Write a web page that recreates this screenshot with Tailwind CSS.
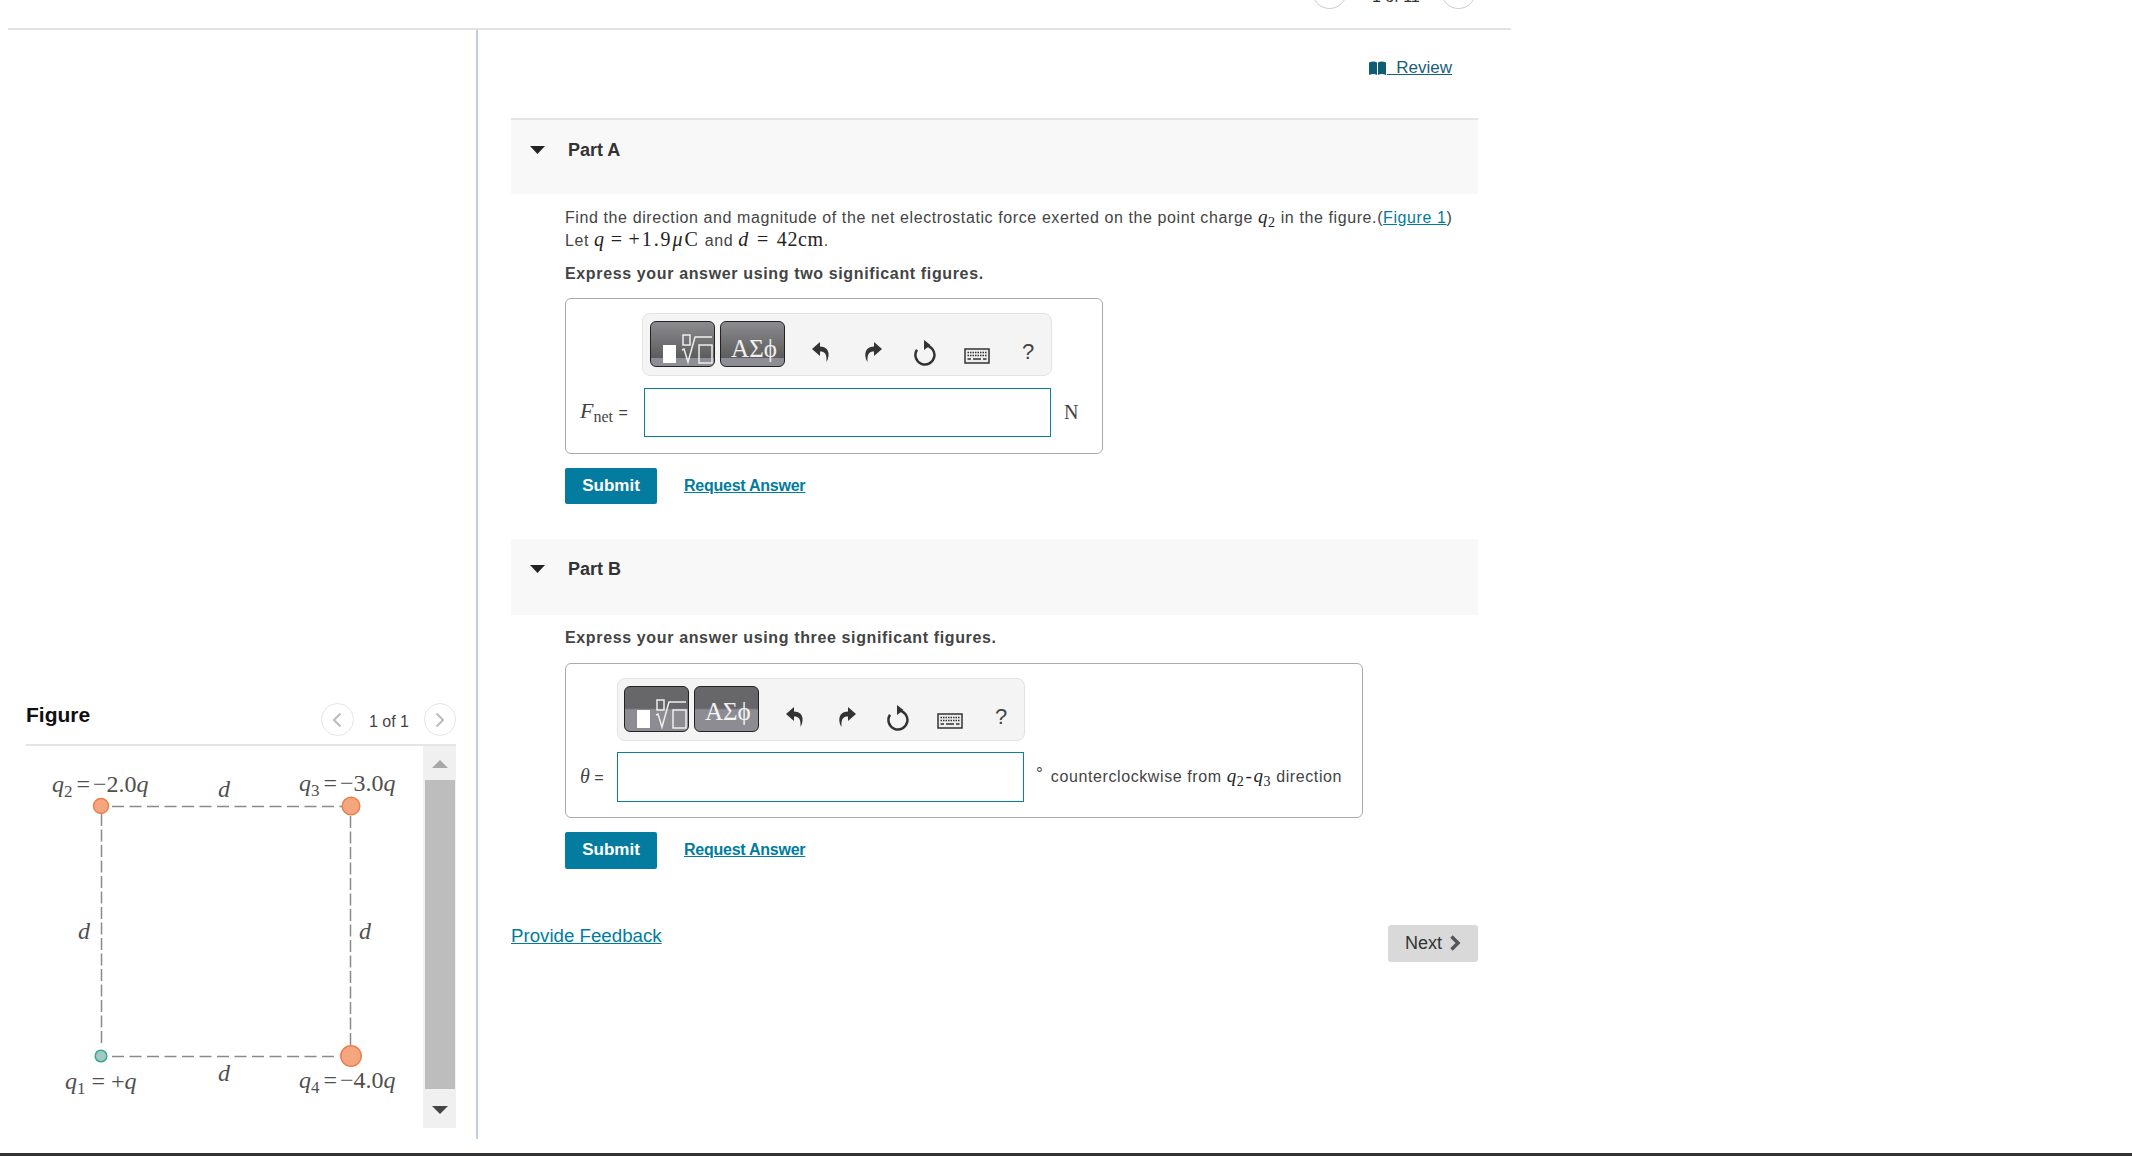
<!DOCTYPE html>
<html lang="en">
<head>
  <meta charset="UTF-8">
  <title>Part A</title>
  <script src="https://cdn.jsdelivr.net/npm/@tailwindcss/browser@4"></script>
</head>
<body class="bg-white">
<div class="flex flex-col h-[1156px] w-[2132px] overflow-hidden font-['Liberation_Sans',Arial,sans-serif] text-[#333]">
  <!-- Top strip, cut off by the screenshot -->
  <header class="w-[1503px] ml-[8px] h-[30px] border-b-2 border-[#e3e3e3] flex items-start shrink-0 overflow-hidden">
    <div class="ml-[1304px] -mt-[26px] w-[35px] h-[35px] rounded-full border border-[#ccc] shrink-0"></div>
    <span class="ml-[25px] -mt-[13px] text-[16px] leading-[20px] w-[46px] whitespace-nowrap shrink-0">1 of 11</span>
    <div class="ml-[23px] -mt-[26px] w-[35px] h-[35px] rounded-full border border-[#ccc] shrink-0"></div>
  </header>

  <div class="flex h-[1109px] shrink-0">
    <!-- Figure panel -->
    <aside class="w-[478px] border-r-2 border-[#bcd0e3] pl-[26px] pr-[20px] pt-[673px] shrink-0">
      <div class="h-[43px] border-b-2 border-[#e3e5e8] flex items-start">
        <h2 class="text-[21px] font-bold leading-[26px] text-[#111] -mt-[1px]">Figure</h2>
        <button class="ml-auto w-[33px] h-[33px] rounded-full border border-[#e5e5e5] flex items-center justify-center">
          <svg width="10" height="16" viewBox="0 0 10 16" class="fill-none stroke-[#bbb] stroke-2"><path d="M8.5 1.5 2 8l6.5 6.5"/></svg>
        </button>
        <span class="ml-[15px] mr-[15px] mt-[9px] text-[16px] leading-[20px] text-[#444]">1 of 1</span>
        <button class="w-[32px] h-[33px] rounded-full border border-[#e5e5e5] flex items-center justify-center">
          <svg width="10" height="16" viewBox="0 0 10 16" class="fill-none stroke-[#bbb] stroke-2"><path d="M1.5 1.5 8 8l-6.5 6.500"/></svg>
        </button>
      </div>
      <div class="flex h-[382px]">
        <svg width="397" height="382" viewBox="26 748 397 382" class="shrink-0 font-['Liberation_Serif',serif] fill-[#4f4f4f] text-[24px]">
          <g class="stroke-[#8a8a8a] stroke-[1.5] fill-none">
            <path d="M112 808.5H342" stroke-dasharray="12 5.5"/>
            <path d="M112 1058.5H336" stroke-dasharray="12 5.5"/>
            <path d="M101.5 816V1046" stroke-dasharray="12 3.5"/>
            <path d="M350.5 818V1048" stroke-dasharray="12 3.5"/>
          </g>
          <circle cx="101" cy="808" r="7.5" class="fill-[#f4a77e] stroke-[#ee7d4d] stroke-[1.5]"/>
          <circle cx="351" cy="808" r="8.8" class="fill-[#f4a77e] stroke-[#ee7d4d] stroke-[1.5]"/>
          <circle cx="101" cy="1058" r="5.8" class="fill-[#a3c9c4] stroke-[#3aa89b] stroke-[1.5]"/>
          <circle cx="351" cy="1058" r="10.2" class="fill-[#f4a77e] stroke-[#ee7d4d] stroke-[1.5]"/>
          <text x="52" y="794"><tspan class="italic">q</tspan><tspan dy="5" class="text-[17px]">2</tspan><tspan dy="-5" dx="4">=</tspan><tspan dx="3">−2.0</tspan><tspan class="italic">q</tspan></text>
          <text x="299" y="793"><tspan class="italic">q</tspan><tspan dy="5" class="text-[17px]">3</tspan><tspan dy="-5" dx="4">=</tspan><tspan dx="3">−3.0</tspan><tspan class="italic">q</tspan></text>
          <text x="65" y="1091"><tspan class="italic">q</tspan><tspan dy="5" class="text-[17px]">1</tspan><tspan dy="-5" dx="6">=</tspan><tspan dx="6">+</tspan><tspan class="italic">q</tspan></text>
          <text x="299" y="1090"><tspan class="italic">q</tspan><tspan dy="5" class="text-[17px]">4</tspan><tspan dy="-5" dx="4">=</tspan><tspan dx="3">−4.0</tspan><tspan class="italic">q</tspan></text>
          <text x="218" y="799" class="italic">d</text>
          <text x="218" y="1083" class="italic">d</text>
          <text x="78" y="941" class="italic">d</text>
          <text x="359" y="941" class="italic">d</text>
        </svg>
        <div class="w-[33px] bg-[#f0f0f0] flex flex-col items-center">
          <svg width="16" height="8" viewBox="0 0 16 8" class="mt-[14px] fill-[#a8a8a8]"><path d="M8 0 16 8H0z"/></svg>
          <div class="mt-[12px] w-[30px] h-[309px] bg-[#bdbdbd]"></div>
          <svg width="16" height="8" viewBox="0 0 16 8" class="mt-[17px] fill-[#444]"><path d="M0 0H16L8 8z"/></svg>
        </div>
      </div>
    </aside>

    <!-- Question column -->
    <main class="w-[1034px] pl-[33px] pr-[34px] pt-[28px]">
      <div class="h-[20px] flex justify-end items-center pr-[26px]">
        <a class="flex items-center text-[17px] leading-[20px] text-[#17607a] underline">
          <svg width="17" height="14" viewBox="0 0 17 14" class="fill-[#0f5c75] mr-[1px]"><path d="M0 1.5C3 .3 6 .3 8 1.5V14C6 12.8 3 12.8 0 14zM9 1.5C11 .3 14 .3 17 1.5V14C14 12.8 11 12.8 9 14z"/></svg>
          <span class="whitespace-pre">  Review</span>
        </a>
      </div>

      <!-- Part A -->
      <div class="mt-[40px] h-[76px] border-t-2 border-[#e5e5e5] bg-[#f8f8f8] flex items-start pt-[19px]">
        <svg width="15" height="8" viewBox="0 0 15 8" class="ml-[19px] mt-[7px] fill-[#222]"><path d="M0 0H15L7.5 8z"/></svg>
        <h3 class="ml-[23px] text-[18px] font-bold leading-[22px]">Part A</h3>
      </div>
      <div class="pl-[54px]">
        <p class="mt-[13px] h-[44px] text-[16px] leading-[22px] tracking-[0.6px] text-[#444] whitespace-nowrap">Find the direction and magnitude of the net electrostatic force exerted on the point charge <span class="font-['Liberation_Serif',serif] text-[19px] leading-none text-[#222]"><i>q</i><sub class="text-[14px]">2</sub></span> in the figure.(<a class="text-[#007c9e] underline">Figure 1</a>)<br>Let <span class="font-['Liberation_Serif',serif] text-[20px] leading-none text-[#222]"><i>q</i><span class="px-[6px]">=</span><span class="tracking-[1.9px]">+1.9<i>μ</i>C</span></span> and <span class="font-['Liberation_Serif',serif] text-[20px] leading-none text-[#222]"><i>d</i><span class="px-[8px]">=</span>42cm</span>.</p>
        <p class="mt-[12px] h-[22px] text-[16px] leading-[22px] font-bold tracking-[0.64px] text-[#444]">Express your answer using two significant figures.</p>

        <div class="mt-[13px] w-[538px] h-[156px] border border-[#aaa] rounded-[6px] pt-[14px]">
          <div class="ml-[76px] w-[410px] h-[63px] rounded-[8px] border border-[#e3e3e3] bg-[#f4f4f4] pl-[7px] pt-[7px] flex items-start">
            <button class="w-[65px] h-[46px] rounded-[6px] border border-[#222] bg-[linear-gradient(#8c8c90,#5c5c5c_82%,#8e8e96_82%)]">
              <svg width="63" height="44" viewBox="0 0 63 44" class="fill-none stroke-[#eee] stroke-[1.5]">
                <rect x="12" y="23" width="13" height="18" class="fill-white stroke-none"/>
                <rect x="32" y="13" width="7" height="10"/>
                <path d="M31 28l2-1 4 13 7-25h17"/>
                <rect x="48" y="23" width="13" height="18"/>
              </svg>
            </button>
            <button class="ml-[5px] w-[65px] h-[46px] rounded-[6px] border border-[#222] bg-[linear-gradient(#8c8c90,#5c5c5c_82%,#8e8e96_82%)] font-['Liberation_Serif',serif] text-[25px] pl-[3px] pt-[9px] leading-[34px] text-white/90">ΑΣϕ</button>
            <div class="ml-[10px] w-[52px] h-[46px] flex justify-center pt-[20px]">
              <svg width="20" height="22" viewBox="0 0 20 22" class="fill-[#333]"><path d="M9 1 1 8l8 7v-4.500c5 0 7 2.500 6.500 10.500C19 15 19 6 9 5.500z"/></svg>
            </div>
            <div class="w-[52px] h-[46px] flex justify-center pt-[20px]">
              <svg width="20" height="22" viewBox="0 0 20 22" class="fill-[#333] -scale-x-100"><path d="M9 1 1 8l8 7v-4.500c5 0 7 2.500 6.500 10.500C19 15 19 6 9 5.500z"/></svg>
            </div>
            <div class="w-[52px] h-[46px] flex justify-center pt-[19px]">
              <svg width="24" height="26" viewBox="0 0 24 26" class="fill-none stroke-[#333] stroke-[2.500]"><path d="M4 9.800A9.500 9.500 0 1 0 12 5.500"/><path d="M11 0l6.500 5-6.500 5z" class="fill-[#333] stroke-none"/></svg>
            </div>
            <div class="w-[52px] h-[46px] flex justify-center pt-[27px]">
              <svg width="26" height="16" viewBox="0 0 26 16" class="fill-[#eee] stroke-[#333]">
                <rect x="1" y="1" width="24" height="14" stroke-width="1.500"/>
                <path d="M3.500 4.500H22.500M3.500 7.500H22.500" stroke-width="1.500" stroke-dasharray="1.500 1"/>
                <path d="M3.500 11H7M9 11H17M19 11H22.500" stroke-width="1.500"/>
              </svg>
            </div>
            <div class="w-[48px] h-[46px] text-center pl-[2px] pt-[18px] text-[22px] leading-[26px] text-[#444]">?</div>
          </div>
          <div class="mt-[12px] flex items-center pl-[14px]">
            <span class="w-[64px] font-['Liberation_Serif',serif] text-[22px] leading-[26px] text-[#444] whitespace-nowrap mb-[1px]"><i>F</i><sub class="text-[16px]">net</sub> <span class="text-[16px] font-['Liberation_Sans',sans-serif]">=</span></span>
            <input type="text" class="w-[407px] h-[49px] border border-[#0b7fa0] bg-white">
            <span class="ml-[13px] mb-[2px] font-['Liberation_Serif',serif] text-[20px] leading-[26px] text-[#444]">N</span>
          </div>
        </div>

        <div class="mt-[14px] flex items-center">
          <button class="w-[92px] h-[36px] rounded-[2px] bg-[#037c9f] text-white text-[17px] font-bold">Submit</button>
          <a class="ml-[27px] text-[16px] tracking-[-0.25px] font-bold leading-[20px] text-[#007c9e] underline">Request Answer</a>
        </div>
      </div>

      <!-- Part B -->
      <div class="mt-[35px] h-[76px] bg-[#f8f8f8] flex items-start pt-[19px]">
        <svg width="15" height="8" viewBox="0 0 15 8" class="ml-[19px] mt-[7px] fill-[#222]"><path d="M0 0H15L7.500 8z"/></svg>
        <h3 class="ml-[23px] text-[18px] font-bold leading-[22px]">Part B</h3>
      </div>
      <div class="pl-[54px]">
        <p class="mt-[12px] h-[22px] text-[16px] leading-[22px] font-bold tracking-[0.64px] text-[#444]">Express your answer using three significant figures.</p>

        <div class="mt-[14px] w-[798px] h-[155px] border border-[#aaa] rounded-[6px] pt-[14px]">
          <div class="ml-[51px] w-[408px] h-[63px] rounded-[8px] border border-[#e3e3e3] bg-[#f4f4f4] pl-[6px] pt-[7px] flex items-start">
            <button class="w-[65px] h-[46px] rounded-[6px] border border-[#222] bg-[linear-gradient(#68686a,#66666a_48%,#8c8c92_52%)]">
              <svg width="63" height="44" viewBox="0 0 63 44" class="fill-none stroke-[#eee] stroke-[1.5]">
                <rect x="12" y="23" width="13" height="18" class="fill-white stroke-none"/>
                <rect x="32" y="13" width="7" height="10"/>
                <path d="M31 28l2-1 4 13 7-25h17"/>
                <rect x="48" y="23" width="13" height="18"/>
              </svg>
            </button>
            <button class="ml-[5px] w-[65px] h-[46px] rounded-[6px] border border-[#222] bg-[linear-gradient(#68686a,#66666a_48%,#8c8c92_52%)] font-['Liberation_Serif',serif] text-[25px] pl-[3px] pt-[5px] leading-[34px] text-white/90">ΑΣϕ</button>
            <div class="ml-[10px] w-[52px] h-[46px] flex justify-center pt-[20px]">
              <svg width="20" height="22" viewBox="0 0 20 22" class="fill-[#333]"><path d="M9 1 1 8l8 7v-4.500c5 0 7 2.500 6.500 10.500C19 15 19 6 9 5.500z"/></svg>
            </div>
            <div class="w-[52px] h-[46px] flex justify-center pt-[20px]">
              <svg width="20" height="22" viewBox="0 0 20 22" class="fill-[#333] -scale-x-100"><path d="M9 1 1 8l8 7v-4.500c5 0 7 2.500 6.500 10.500C19 15 19 6 9 5.500z"/></svg>
            </div>
            <div class="w-[52px] h-[46px] flex justify-center pt-[19px]">
              <svg width="24" height="26" viewBox="0 0 24 26" class="fill-none stroke-[#333] stroke-[2.500]"><path d="M4 9.800A9.500 9.500 0 1 0 12 5.500"/><path d="M11 0l6.500 5-6.500 5z" class="fill-[#333] stroke-none"/></svg>
            </div>
            <div class="w-[52px] h-[46px] flex justify-center pt-[27px]">
              <svg width="26" height="16" viewBox="0 0 26 16" class="fill-[#eee] stroke-[#333]">
                <rect x="1" y="1" width="24" height="14" stroke-width="1.500"/>
                <path d="M3.500 4.500H22.500M3.500 7.500H22.500" stroke-width="1.500" stroke-dasharray="1.500 1"/>
                <path d="M3.500 11H7M9 11H17M19 11H22.500" stroke-width="1.500"/>
              </svg>
            </div>
            <div class="w-[48px] h-[46px] text-center pl-[2px] pt-[18px] text-[22px] leading-[26px] text-[#444]">?</div>
          </div>
          <div class="mt-[11px] flex items-center pl-[14px]">
            <span class="w-[37px] text-[16px] leading-[26px] text-[#444] whitespace-nowrap"><i class="font-['Liberation_Serif',serif] text-[20px]">θ</i> =</span>
            <input type="text" class="w-[407px] h-[50px] border border-[#0b7fa0] bg-white">
            <span class="ml-[12px] mb-[6px] text-[17px] leading-[20px] text-[#444]">°</span>
            <span class="ml-[8px] text-[16px] leading-[26px] tracking-[0.6px] text-[#444] whitespace-nowrap">counterclockwise from <span class="font-['Liberation_Serif',serif] text-[19px] leading-none text-[#222]"><i>q</i><sub class="text-[14px]">2</sub><span class="px-[1px]">-</span><i>q</i><sub class="text-[14px]">3</sub></span> direction</span>
          </div>
        </div>

        <div class="mt-[14px] flex items-center">
          <button class="w-[92px] h-[37px] rounded-[2px] bg-[#037c9f] text-white text-[17px] font-bold pb-[2px]">Submit</button>
          <a class="ml-[27px] mb-[2px] text-[16px] tracking-[-0.25px] font-bold leading-[20px] text-[#007c9e] underline">Request Answer</a>
        </div>
      </div>

      <div class="mt-[56px] flex justify-between items-start">
        <a class="text-[18.700px] leading-[22px] text-[#007c9e] underline">Provide Feedback</a>
        <button class="w-[90px] h-[37px] rounded-[3px] bg-[#d9d9d9] text-[18px] text-[#333] flex items-center justify-center gap-[7px] pb-[1px]">
          Next
          <svg width="12" height="16" viewBox="0 0 12 16" class="fill-none stroke-[#555] stroke-[3.500]"><path d="M2.500 1.500 9 8l-6.500 6.500"/></svg>
        </button>
      </div>
    </main>
  </div>

  <div class="mt-auto h-[3px] bg-[#333] shrink-0"></div>
</div>
</body>
</html>
